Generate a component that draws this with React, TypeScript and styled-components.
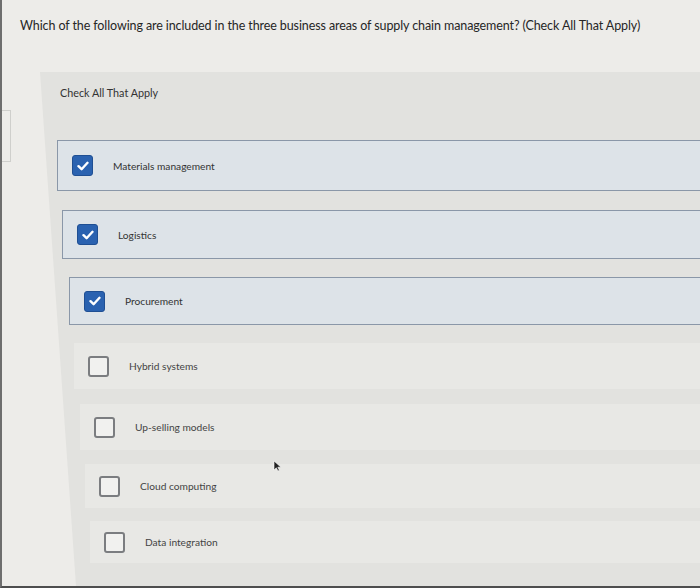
import React from 'react';
import styled, { createGlobalStyle } from 'styled-components';

const GlobalStyle = createGlobalStyle`
  html, body {
    margin: 0;
    padding: 0;
    background: #ecebe8;
  }
  body {
    font-family: Lato, "Liberation Sans", sans-serif;
  }
`;

const Screen = styled.div`
  position: relative;
  box-sizing: border-box;
  width: 700px;
  height: 588px;
  overflow: hidden;
  background: #edece9;
  border-left: 2px solid #6e6e6e;
  border-bottom: 2px solid #4e4e4e;
`;

const Question = styled.div`
  padding: 18px 0 0 18px;
  height: 72px;
  box-sizing: border-box;
  font-size: 12.5px;
  color: #262626;
  letter-spacing: -0.1px;
`;

const Panel = styled.div`
  margin-left: 38px;
  height: 514px;
  background: #e2e2df;
  clip-path: polygon(0 0, 100% 0, 100% 100%, 36px 100%);
  padding-top: 14px;
  box-sizing: border-box;
`;

const PanelLabel = styled.div`
  padding-left: 20px;
  font-size: 10.8px;
  color: #333;
  height: 54px;
`;

const Options = styled.div`
  display: flex;
  flex-direction: column;
`;

const Option = styled.label<{ $checked: boolean; $indent: number; $h: number; $mt: number }>`
  display: flex;
  align-items: center;
  box-sizing: border-box;
  height: ${p => p.$h}px;
  margin-top: ${p => p.$mt}px;
  margin-left: ${p => p.$indent}px;
  padding-left: 14px;
  gap: 20px;
  background: ${p => (p.$checked ? '#dde3e8' : '#e8e8e5')};
  border: ${p => (p.$checked ? '1.5px solid #8a97a8' : 'none')};
  border-right: none;
`;

const Box = styled.span<{ $checked: boolean }>`
  flex: none;
  box-sizing: border-box;
  width: 21px;
  height: 21px;
  border-radius: 3px;
  display: flex;
  align-items: center;
  justify-content: center;
  background: ${p => (p.$checked ? '#2a62b0' : '#f1f1ef')};
  border: ${p => (p.$checked ? '1px solid #1f4f93' : '2px solid #7b7d80')};
`;

const OptionText = styled.span<{ $checked: boolean }>`
  font-size: 10.2px;
  color: ${p => (p.$checked ? '#333' : '#444')};
`;

const EdgeTab = styled.div`
  position: absolute;
  left: -2px;
  top: 110px;
  width: 10px;
  height: 50px;
  border: 1px solid #cfcfcc;
  border-left: none;
`;

const Cursor = styled.svg`
  position: absolute;
  left: 271px;
  top: 460px;
`;

const items = [
  { text: 'Materials management', checked: true, indent: 17, h: 51, mt: 0 },
  { text: 'Logistics', checked: true, indent: 22, h: 49, mt: 19 },
  { text: 'Procurement', checked: true, indent: 29, h: 48, mt: 18 },
  { text: 'Hybrid systems', checked: false, indent: 34, h: 46, mt: 18 },
  { text: 'Up-selling models', checked: false, indent: 40, h: 46, mt: 15 },
  { text: 'Cloud computing', checked: false, indent: 45, h: 44, mt: 14 },
  { text: 'Data integration', checked: false, indent: 50, h: 42, mt: 13 },
];

const Check = () => (
  <svg width="12" height="10" viewBox="0 0 12 10">
    <path d="M1.5 5.2 L4.6 8.2 L10.5 1.8" fill="none" stroke="#fff" strokeWidth="2.4" strokeLinecap="round" strokeLinejoin="round" />
  </svg>
);

const App: React.FC = () => (
  <>
    <GlobalStyle />
    <Screen>
      <Question>
        Which of the following are included in the three business areas of supply chain management? (Check All That Apply)
      </Question>
      <Panel>
        <PanelLabel>Check All That Apply</PanelLabel>
        <Options>
          {items.map(item => (
            <Option key={item.text} $checked={item.checked} $indent={item.indent} $h={item.h} $mt={item.mt}>
              <Box $checked={item.checked}>{item.checked && <Check />}</Box>
              <OptionText $checked={item.checked}>{item.text}</OptionText>
            </Option>
          ))}
        </Options>
      </Panel>
      <EdgeTab />
      <Cursor width="9" height="12" viewBox="0 0 9 12">
        <path d="M1 1 L1 10 L3.3 7.8 L5 11 L6.4 10.3 L4.8 7.2 L8 7.2 Z" fill="#222" stroke="#fff" strokeWidth="0.6" />
      </Cursor>
    </Screen>
  </>
);

export default App;
